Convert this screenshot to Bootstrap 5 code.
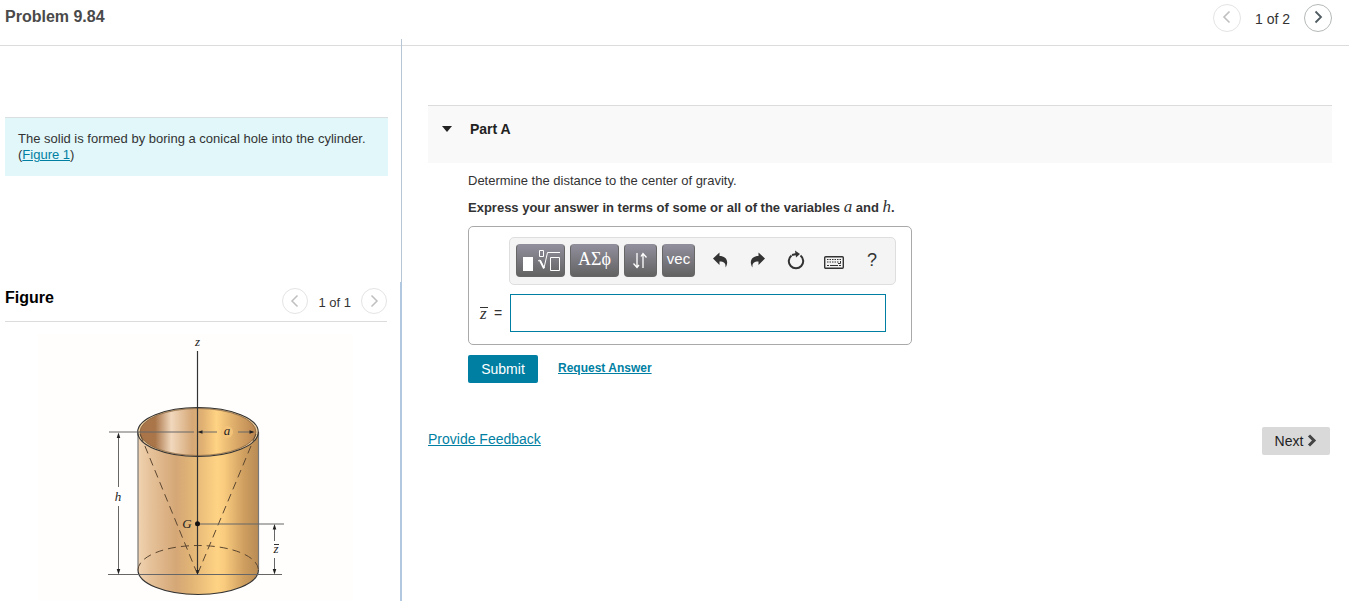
<!DOCTYPE html>
<html lang="en">
<head>
<meta charset="utf-8">
<meta name="viewport" content="width=device-width, initial-scale=1">
<title>Problem 9.84</title>
<link href="https://cdn.jsdelivr.net/npm/bootstrap@5.3.0/dist/css/bootstrap.min.css" rel="stylesheet">
<style>
  body { font-family: "Liberation Sans", Arial, sans-serif; font-size: 13px; line-height: 16px; color: #333; background: #fff; }
  a { color: #007fa3; }
  a:hover { color: #005a75; }
  h1, h2, h3, p { margin: 0; }
  .top-bar { height: 46px; border-bottom: 1px solid #dcdcdc; padding: 4px 17px 0 5px; }
  .top-bar h1 { font-size: 16px; line-height: 26px; font-weight: 700; color: #4a4a4a; }
  .pager { font-size: 14px; color: #333; gap: 14px; }
  .pager span { padding-top: 2px; }
  .pager-small { font-size: 13px; gap: 10px; }
  .pager-small span { padding-top: 4px; }
  .round-btn { width: 28px; height: 28px; padding: 0; border: 1px solid #b5b8b9; border-radius: 50%; background: #fff; color: #4f5b60; display: flex; align-items: center; justify-content: center; }
  .round-btn:disabled { border-color: #e4e4e4; color: #bfbfbf; }
  .pager-small .round-btn { width: 26px; height: 26px; }
  .side-pane { width: 402px; margin-top: -7px; }
  .intro-pane { height: 243px; padding: 78px 13px 0 5px; border-right: 1px solid #b7c6d6; }
  .intro-box { background: #e1f7f9; border-top: 1px solid #dadfe0; padding: 13px; height: 59px; }
  .figure-pane { padding: 0 13px 0 5px; border-right: 2px solid #b2c8e0; }
  .figure-head { height: 40px; padding-top: 6px; border-bottom: 1px solid #dcdcdc; }
  .figure-head h2 { font-size: 16px; line-height: 20px; font-weight: 700; color: #000; }
  .figure-art { display: block; width: 100%; }
  .main-pane { min-width: 0; padding: 59px 17px 0 26px; }
  .part-head { height: 58px; background: #f9f9f9; border-top: 1px solid #dcdcdc; padding: 14px; }
  .part-toggle { border: 0; background: none; padding: 0; gap: 18px; font-size: 14px; line-height: 18px; font-weight: 700; color: #222; }
  .part-body { padding: 10px 0 0 40px; }
  .math-var { font: italic 400 17px/16px "Liberation Serif", serif; }
  .answer-hint { margin-top: 10px; }
  .answer-box { max-width: 444px; margin-top: 10px; padding: 10px 15px 12px 9px; border: 1px solid #a9a9a9; border-radius: 5px; display: grid; grid-template-columns: 31px 1fr; row-gap: 9px; }
  .tool-strip { grid-column: 2; height: 48px; padding: 6px; background: #f4f4f4; border: 1px solid #dedede; border-radius: 5px; gap: 5px; }
  .dark-btn { height: 33px; width: 33px; padding: 0; border: 1px solid #666; border-top-color: #8f8d99; border-radius: 4px; background: linear-gradient(#918f9c, #626262); color: #fff; font-size: 15px; line-height: 28px; display: flex; justify-content: center; }
  .dark-btn.wide-btn { width: 49px; }
  .greek-text { font: 18px/28px "Liberation Serif", serif; }
  .tool-icons { flex: 1; padding: 0 4px 0 7px; justify-content: space-between; }
  .plain-btn { width: 26px; height: 32px; padding: 0; border: 0; background: none; color: #333; font-size: 18px; display: flex; align-items: center; justify-content: center; }
  .answer-label { align-self: center; padding-left: 2px; gap: 6px; font-size: 14px; }
  .z-bar { width: 8px; height: 13px; border-top: 1px solid #333; line-height: 12px; }
  .answer-input { width: calc(100% - 11px); margin-left: 1px; height: 38px; border: 1px solid #007fa3; border-radius: 0; padding: 4px 8px; font-size: 16px; }
  .answer-input:focus { outline: 1px solid #007fa3; }
  .submit-row { margin-top: 10px; }
  .submit-btn { width: 70px; height: 28px; padding: 0; border: 0; border-radius: 2px; background: #007fa3; color: #fff; font-size: 14px; }
  .request-link { font-size: 12px; line-height: 18px; padding-bottom: 2px; font-weight: 700; }
  .foot-row { margin-top: 44px; padding-right: 2px; font-size: 14px; }
  .next-btn { width: 68px; height: 28px; padding: 0; border: 0; border-radius: 2px; background: #d9d9d9; color: #222; font-size: 14px; gap: 4px; display: flex; align-items: center; justify-content: center; }
</style>
<script src="https://cdn.jsdelivr.net/npm/bootstrap@5.3.0/dist/js/bootstrap.bundle.min.js"></script>
</head>
<body>
<header class="top-bar d-flex justify-content-between align-items-start">
  <h1>Problem 9.84</h1>
  <nav class="pager d-flex align-items-center" aria-label="Problem items">
    <button class="round-btn" type="button" disabled aria-label="Previous item"><svg width="12" height="16" viewBox="0 0 12 16" fill="none" stroke="currentColor" stroke-width="1.6"><path d="M8.500 1.500 3 7l5.500 5.500"/></svg></button>
    <span>1 of 2</span>
    <button class="round-btn" type="button" aria-label="Next item"><svg width="12" height="16" viewBox="0 0 12 16" fill="none" stroke="currentColor" stroke-width="1.8"><path d="M3.500 1.500 9 7l-5.500 5.500"/></svg></button>
  </nav>
</header>

<div class="d-flex">
  <aside class="side-pane flex-shrink-0">
    <section class="intro-pane">
      <div class="intro-box">
        <p>The solid is formed by boring a conical hole into the cylinder.<br>(<a href="#figure">Figure 1</a>)</p>
      </div>
    </section>
    <section class="figure-pane" id="figure">
      <div class="figure-head d-flex justify-content-between align-items-start">
        <h2>Figure</h2>
        <nav class="pager pager-small d-flex align-items-center" aria-label="Figures">
          <button class="round-btn" type="button" disabled aria-label="Previous figure"><svg width="12" height="14" viewBox="0 0 12 14" fill="none" stroke="currentColor" stroke-width="1.500"><path d="M8.500 1.500 3 7l5.500 5.500"/></svg></button>
          <span>1 of 1</span>
          <button class="round-btn" type="button" disabled aria-label="Next figure"><svg width="12" height="14" viewBox="0 0 12 14" fill="none" stroke="currentColor" stroke-width="1.500"><path d="M3.500 1.500 9 7l-5.500 5.500"/></svg></button>
        </nav>
      </div>
      <svg class="figure-art" viewBox="5 322 382 279" role="img" aria-label="Cylinder with a conical hole">
        <defs>
          <linearGradient id="wall">
            <stop offset="0" stop-color="#f0d3b2"/><stop offset=".1" stop-color="#e6c29a"/><stop offset=".32" stop-color="#d5a776"/>
            <stop offset=".45" stop-color="#e2b576"/><stop offset=".66" stop-color="#ffd384"/><stop offset=".72" stop-color="#f8cb7e"/><stop offset=".88" stop-color="#cf9f60"/><stop offset="1" stop-color="#b98c55"/>
          </linearGradient>
          <linearGradient id="hole">
            <stop offset="0" stop-color="#a87448"/><stop offset=".13" stop-color="#a97549"/><stop offset=".27" stop-color="#f1d8bd"/>
            <stop offset=".45" stop-color="#d6a877"/><stop offset=".54" stop-color="#e0b172"/><stop offset=".66" stop-color="#ffd384"/><stop offset=".8" stop-color="#e0b06c"/><stop offset="1" stop-color="#b98450"/>
          </linearGradient>
        </defs>
        <path fill="#fffefd" d="M38 334h315v267H38z"/>
        <path fill="url(#wall)" d="M138 432a60 24.500 0 0 1 120 0V570a60 24.500 0 0 1-120 0z"/>
        <ellipse cx="198" cy="432" rx="60" ry="24.500" fill="#efcf9f"/>
        <ellipse cx="198" cy="432" rx="58" ry="23.500" fill="url(#hole)" stroke="#7c5a38" stroke-width=".7"/>
        <g fill="none" stroke="#333">
          <path stroke="#777" stroke-width="1.200" d="M138 432V570M258.500 432V570"/>
          <ellipse cx="198" cy="432" rx="60.300" ry="24.500" stroke-width="1.100"/>
          <path stroke-width="1.200" d="M138 570a60.200 24.500 0 0 0 120.400 0"/>
          <path stroke="#5b4630" stroke-dasharray="8 5" d="M138 570a60.200 24.500 0 0 1 120.400 0M140 434 197 573M256 434 198 573"/>
          <g stroke-width="1" stroke="#666">
            <path d="M109 432h85M108 574.500h174M197.500 524h86.500M118.500 434v53M118.500 506v67M274.500 526v15M274.500 558v15M200 432h17M238 432h15"/>
          </g>
          <path stroke="#333" stroke-width="1.200" d="M197.500 351v223"/>
        </g>
        <path fill="#222" d="m118.500 432.500 1.800 5.500h-3.600zM118.500 574.500l1.800-5.500h-3.600zM274.500 524l1.800 5.500h-3.600zM274.500 574.500l1.800-5.500h-3.600zM197.500 432l5-1.800v3.600zM254.500 432l-5-1.800v3.600zM197.500 575l1.500-5h-3z"/>
        <circle cx="197.500" cy="523.700" r="2.500" fill="#111"/>
        <circle cx="227" cy="432" r="6" fill="#f3c37a"/>
        <path stroke="#333" d="M274 544.500h5"/>
        <g font-family="Liberation Serif, serif" font-style="italic" font-size="13" fill="#222" text-anchor="middle">
          <text x="197.500" y="346">z</text><text x="227" y="435">a</text><text x="118" y="501">h</text>
          <text x="187" y="528">G</text><text x="276" y="553">z</text>
        </g>
      </svg>
    </section>
  </aside>

  <main class="main-pane flex-grow-1">
    <div class="part-head">
      <button class="part-toggle d-flex align-items-center" type="button" aria-expanded="true"><svg width="10" height="6" viewBox="0 0 10 6"><path fill="#222" d="M0 0h10L5 6z"/></svg>Part A</button>
    </div>
    <div class="part-body">
      <p>Determine the distance to the center of gravity.</p>
      <p class="answer-hint fw-bold">Express your answer in terms of some or all of the variables <span class="math-var">a</span> and <span class="math-var">h</span>.</p>
      <div class="answer-box">
        <div class="tool-strip d-flex" role="toolbar" aria-label="Math tools">
          <button class="dark-btn wide-btn" type="button" aria-label="Templates"><svg width="47" height="31" viewBox="0 0 47 31" fill="none" stroke="#fff"><path fill="#fff" stroke="none" d="M6 12h10v14H6z"/><path d="M22.500 5.500h4v6h-4zM21 16l2-1 4 8 3.500-15.500H43M33.500 12.500h9v13h-9z"/><path stroke-width="1.800" d="m23 15.500 4 8"/></svg></button>
          <button class="dark-btn wide-btn" type="button" aria-label="Greek symbols"><span class="greek-text">ΑΣϕ</span></button>
          <button class="dark-btn" type="button" aria-label="Arrows"><svg width="31" height="31" viewBox="0 0 31 31" fill="none" stroke="#fff" stroke-width="1.300"><path d="M12 8v14M8.500 18.500 12 22.500l2-2.500M18 23V9M16 11.500 18 8.500l3.500 4"/></svg></button>
          <button class="dark-btn" type="button">vec</button>
          <div class="tool-icons d-flex">
            <button class="plain-btn" type="button" aria-label="Undo"><svg width="16" height="16" viewBox="0 0 16 16"><path fill="#333" d="M1 6.500 7.500 .5v3.500c5 0 8.500 3 7.500 8-.3 1.500-.8 2.500-1.500 3.500 .3-4-1-6-6-6v3.500z"/></svg></button>
            <button class="plain-btn" type="button" aria-label="Redo"><svg width="16" height="16" viewBox="0 0 16 16"><path fill="#333" d="M15 6.500 8.500 .5v3.500c-5 0-8.500 3-7.500 8 .3 1.500 .8 2.500 1.500 3.500-.3-4 1-6 6-6v3.500z"/></svg></button>
            <button class="plain-btn" type="button" aria-label="Reset"><svg width="18" height="20" viewBox="0 0 18 20"><path fill="none" stroke="#333" stroke-width="2" d="M4.500 5.500A7.200 7.200 0 1 0 13.500 5.500M5 5 9.500 4"/><path fill="#333" d="m8 .5 5 3.500-4 3.500z"/></svg></button>
            <button class="plain-btn" type="button" aria-label="Keyboard shortcuts"><svg class="mt-1" width="20" height="13" viewBox="0 0 20 13" fill="none" stroke="#333"><rect x=".7" y=".7" width="18.600" height="11.600" rx="1" stroke-width="1.400"/><path stroke-width="1.200" stroke-dasharray="1.500 1" d="M3 3.500h14M3 6h12"/><path d="M3 9.500h2M6 9.500h8M15 9.500h2M16.500 5v2.500h-2.500"/></svg></button>
            <button class="plain-btn" type="button" aria-label="Help">?</button>
          </div>
        </div>
        <label class="answer-label d-flex align-items-center" for="answer"><span class="math-var z-bar">z</span><span>=</span></label>
        <input class="answer-input" id="answer" type="text" autocomplete="off">
      </div>
      <div class="submit-row d-flex align-items-center">
        <button class="submit-btn" type="submit">Submit</button>
        <a class="request-link ms-3 ps-1" href="#">Request Answer</a>
      </div>
    </div>
    <div class="foot-row d-flex justify-content-between">
      <a class="pt-1" href="#">Provide Feedback</a>
      <button class="next-btn" type="button">Next<svg width="10" height="14" viewBox="0 0 10 14" fill="none" stroke="#444" stroke-width="3"><path d="m2 1.500 5 5-5 5"/></svg></button>
    </div>
  </main>
</div>
</body>
</html>
